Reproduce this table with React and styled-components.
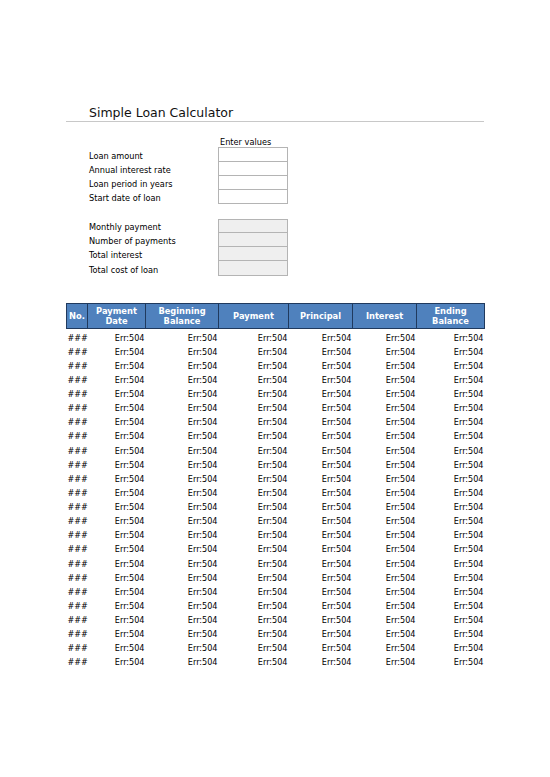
import React from 'react';
import styled, { createGlobalStyle } from 'styled-components';

const GlobalStyle = createGlobalStyle`
body {
    margin: 0;
    background: #fff;
    font-family: "DejaVu Sans", "Liberation Sans", sans-serif;
    color: #000;
}
`

const inputs = ['Loan amount', 'Annual interest rate', 'Loan period in years', 'Start date of loan'];
const outputs = ['Monthly payment', 'Number of payments', 'Total interest', 'Total cost of loan'];
const columns = [
    { label: 'No.', width: 21 },
    { label: 'Payment Date', width: 58 },
    { label: 'Beginning Balance', width: 73 },
    { label: 'Payment', width: 70 },
    { label: 'Principal', width: 64 },
    { label: 'Interest', width: 64 },
    { label: 'Ending Balance', width: 68 },
];
const rows = Array.from({ length: 24 }, (_, i) => i);

const App = () => {
    return (
        <Page>
            <GlobalStyle />
            <Sheet>
                <TitleBar>
                    <Title>Simple Loan Calculator</Title>
                </TitleBar>

                <Form>
                    <span />
                    <Caption>Enter values</Caption>
                    {inputs.map((label, i) => (
                        <React.Fragment key={label}>
                            <Label>{label}</Label>
                            <Cell $first={i === 0} />
                        </React.Fragment>
                    ))}
                    <Spacer />
                    {outputs.map((label, i) => (
                        <React.Fragment key={label}>
                            <Label>{label}</Label>
                            <Cell $first={i === 0} $filled />
                        </React.Fragment>
                    ))}
                </Form>

                <Schedule>
                    <colgroup>
                        {columns.map(c => <col key={c.label} style={{ width: c.width }} />)}
                    </colgroup>
                    <thead>
                        <tr>
                            {columns.map(c => (
                                <Head key={c.label}>
                                    {c.label.split(' ').map(w => <div key={w}>{w}</div>)}
                                </Head>
                            ))}
                        </tr>
                    </thead>
                    <tbody>
                        {rows.map(r => (
                            <tr key={r}>
                                <Data $left>###</Data>
                                {columns.slice(1).map(c => <Data key={c.label}>Err:504</Data>)}
                            </tr>
                        ))}
                    </tbody>
                </Schedule>
            </Sheet>
        </Page>
    );
};

export default App;

const Page = styled.div`
width: 550px;
height: 777px;
overflow: hidden;
`

const Sheet = styled.div`
margin-left: 66px;
width: 418px;
padding-top: 102px;
`

const TitleBar = styled.div`
height: 18px;
padding-left: 23px;
padding-bottom: 1px;
display: flex;
align-items: flex-end;
border-bottom: 1px solid #c8c8c8;
`

const Title = styled.h1`
margin: 0;
font-size: 12.5px;
font-weight: normal;
line-height: 15px;
color: #111;
`

const Form = styled.div`
display: grid;
grid-template-columns: 129px 70px;
grid-auto-rows: 14.25px;
margin-top: 11px;
padding-left: 23px;
font-size: 8.2px;
`

const Caption = styled.div`
padding-left: 2px;
display: flex;
align-items: flex-end;
line-height: 10px;
`

const Label = styled.div`
display: flex;
align-items: flex-end;
line-height: 10px;
padding-bottom: 1px;
white-space: nowrap;
`

const Spacer = styled.div`
grid-column: 1 / span 2;
`

const Cell = styled.div`
box-sizing: border-box;
border: 1px solid #b4b4b4;
border-top: ${props => props.$first ? '1px solid #b4b4b4' : 'none'};
background: ${props => props.$filled ? '#efefef' : '#fff'};
`

const Schedule = styled.table`
margin-top: 27px;
width: 418px;
table-layout: fixed;
border-collapse: collapse;
border-spacing: 0;
`

const Head = styled.th`
height: 24px;
padding: 0;
background: #4f81bd;
border: 1px solid #203a5e;
color: #fff;
font-size: 8.3px;
font-weight: bold;
line-height: 10px;
text-align: center;
vertical-align: middle;
`

const Data = styled.td`
height: 14.13px;
padding: 0 1px;
font-size: 8.1px;
line-height: 10px;
text-align: ${props => props.$left ? 'left' : 'right'};
white-space: nowrap;
vertical-align: middle;
tr:first-child > & {
    padding-top: 2px;
}
`
